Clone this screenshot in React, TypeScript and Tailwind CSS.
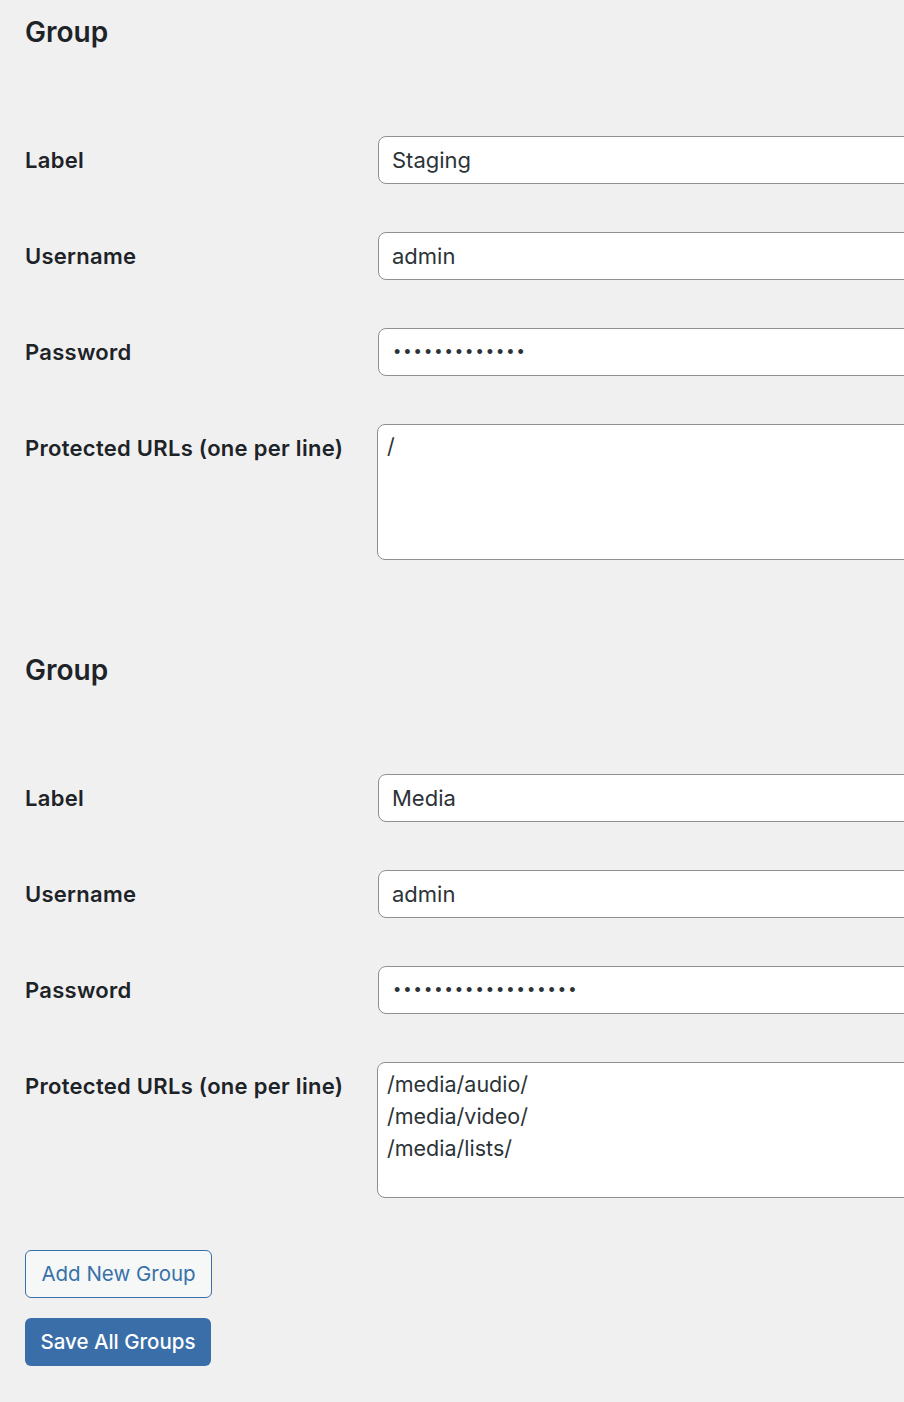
import React, { useState } from 'react';

interface Group {
    label: string;
    username: string;
    password: string;
    urls: string;
}

const initialGroups: Group[] = [
    { label: 'Staging', username: 'admin', password: 'staging-pass1', urls: '/' },
    { label: 'Media', username: 'admin', password: 'media-password-123', urls: '/media/audio/\n/media/video/\n/media/lists/' },
];

const inputClass =
    'w-[720px] shrink-0 h-12 rounded-lg border border-[#8c8f94] bg-white px-[13px] text-[22px] text-[#2c3338] outline-none';

const Row: React.FC<{ label: string; children: React.ReactNode }> = ({ label, children }) => (
    <div className="flex items-start">
        <div className="w-[353px] shrink-0 h-12 flex items-center text-[22px] font-semibold tracking-[0.28px] text-[#1d2327]">{label}</div>
        {children}
    </div>
);

const App: React.FC = () => {
    const [groups, setGroups] = useState<Group[]>(initialGroups);

    const update = (i: number, key: keyof Group, value: string) => {
        setGroups(groups.map((g, idx) => (idx === i ? { ...g, [key]: value } : g)));
    };

    return (
        <div
            className="min-h-[1402px] w-full overflow-hidden bg-[#f0f0f1] pl-[25px]"
            style={{ fontFamily: 'Inter, "Noto Sans", sans-serif' }}
        >
            {groups.map((g, i) => (
                <div key={i} className={i === 0 ? 'pt-[14px]' : 'pt-[92px]'}>
                    <h2 className="h-9 leading-9 text-[28px] font-semibold text-[#1d2327]">Group</h2>
                    <div className="mt-[86px] flex flex-col gap-12">
                        <Row label="Label">
                            <input className={inputClass} value={g.label} onChange={(e) => update(i, 'label', e.target.value)} />
                        </Row>
                        <Row label="Username">
                            <input className={inputClass} value={g.username} onChange={(e) => update(i, 'username', e.target.value)} />
                        </Row>
                        <Row label="Password">
                            <input
                                type="password"
                                className="w-[720px] shrink-0 h-12 rounded-lg border border-[#8c8f94] bg-white pl-[15px] pr-[13px] font-['Liberation_Sans',sans-serif] text-[18px] tracking-[4px] text-[#2c3338] outline-none"
                                value={g.password}
                                onChange={(e) => update(i, 'password', e.target.value)}
                            />
                        </Row>
                        <Row label="Protected URLs (one per line)">
                            <textarea
                                className="-ml-px w-[720px] shrink-0 h-[136px] resize-none rounded-lg border border-[#8c8f94] bg-white px-[9px] pt-[5px] text-[21.5px] leading-8 text-[#2c3338] outline-none"
                                value={g.urls}
                                onChange={(e) => update(i, 'urls', e.target.value)}
                            />
                        </Row>
                    </div>
                </div>
            ))}

            {/* ACTIONS */}
            <div className="mt-[52px] flex flex-col items-start gap-5">
                <button
                    onClick={() => setGroups([...groups, { label: '', username: '', password: '', urls: '' }])}
                    className="h-12 w-[187px] rounded-md border-[1.5px] border-[#3871aa] bg-[#f6f7f7] text-[20.5px] text-[#3871aa]"
                >
                    Add New Group
                </button>
                <button className="h-12 w-[186px] rounded-md bg-[#3a6ea9] text-[20.5px] font-medium text-white">
                    Save All Groups
                </button>
            </div>
        </div>
    );
};

export default App;
